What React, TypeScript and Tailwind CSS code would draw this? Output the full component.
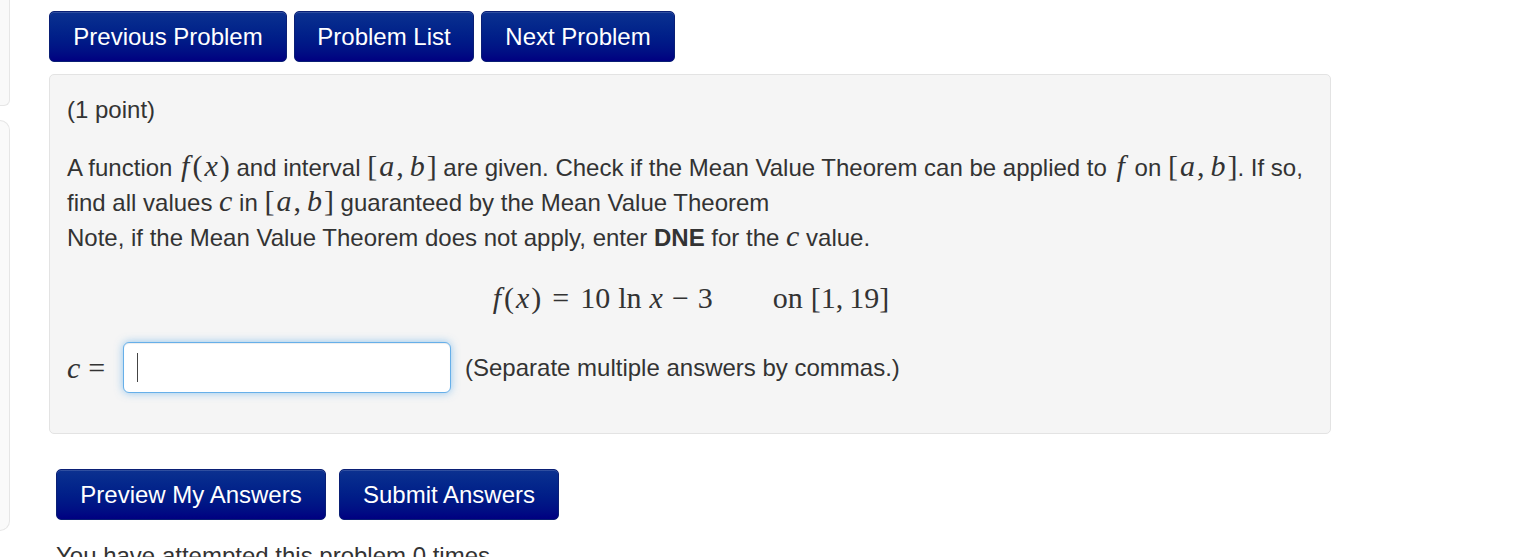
import { ReactNode } from "react";

const sans = "font-['Liberation_Sans',Arial,sans-serif]";
const serif = "font-['Liberation_Serif','Times_New_Roman',serif]";

function NavButton({ children, className = "" }: { children: ReactNode; className?: string }) {
    return (
        <button
            className={`h-[51px] rounded-[5px] border border-[#0a1f75] bg-gradient-to-b from-[#0c3190] to-[#000081] text-[24px] text-white shadow-[inset_0_1px_0_rgba(255,255,255,0.15)] ${className}`}
        >
            {children}
        </button>
    );
}

// inline TeX-ish math
function M({ children, className = "" }: { children: ReactNode; className?: string }) {
    return <span className={`${serif} text-[30px] leading-none ${className}`}>{children}</span>;
}

function V({ children, className = "" }: { children: ReactNode; className?: string }) {
    return <i className={className}>{children}</i>;
}

function Fx() {
    return (
        <>
            <V className="ml-[2px] mr-[3px]">f</V>(<V className="mx-[2px]">x</V>)
        </>
    );
}

function Interval() {
    return (
        <M>
            [<V className="mx-[2px]">a</V>,<span className="ml-[6px]" />
            <V className="mr-[2px]">b</V>]
        </M>
    );
}

export default function App() {
    return (
        <div className={`flex min-h-[557px] overflow-hidden bg-white text-[#333] ${sans}`}>
            <div className="flex w-[10px] shrink-0 flex-col">
                <div className="h-[106px] rounded-br-[6px] border-r border-b border-[#e6e6e6] bg-[#f9f9f9]" />
                <div className="mt-[14px] h-[411px] rounded-r-[10px] border-y border-r border-[#e6e6e6] bg-[#fafafa]" />
            </div>

            <div className="ml-[39px] w-[1282px] pt-[11px]">
                <div className="flex gap-[7px]">
                    <NavButton className="w-[238px]">Previous Problem</NavButton>
                    <NavButton className="w-[180px]">Problem List</NavButton>
                    <NavButton className="w-[194px]">Next Problem</NavButton>
                </div>

                <div className="mt-[12px] h-[360px] rounded-[5px] border border-[#e3e3e3] bg-[#f5f5f5] px-[17px] pt-[17px] text-[24px] leading-[35px]">
                    <p>(1 point)</p>

                    <p className="mt-[23px]">
                        A function{" "}
                        <M>
                            <Fx />
                        </M>{" "}
                        and interval <Interval /> are given. Check if the Mean Value Theorem can be applied to{" "}
                        <M>
                            <V className="ml-[3px] mr-[3px]">f</V>
                        </M>{" "}
                        on <Interval />. If so,
                        <br />
                        find all values{" "}
                        <M>
                            <V>c</V>
                        </M>{" "}
                        in <Interval /> guaranteed by the Mean Value Theorem
                        <br />
                        Note, if the Mean Value Theorem does not apply, enter <b>DNE</b> for the{" "}
                        <M>
                            <V>c</V>
                        </M>{" "}
                        value.
                    </p>

                    <div className="mt-[28px] flex justify-center">
                        <M className="leading-[35px]">
                            <Fx />
                            <span className="mx-[11px]">=</span>10<span className="ml-[8px]">ln</span>
                            <V className="ml-[8px]">x</V>
                            <span className="mx-[9px]">−</span>3<span className="ml-[60px]">on</span>
                            <span className="ml-[8px]">[1,</span>
                            <span className="ml-[6px]">19]</span>
                        </M>
                    </div>

                    <div className="mt-[29px] flex items-center">
                        <M className="w-[56px]">
                            <V>c</V>
                            <span className="ml-[8px]">=</span>
                        </M>
                        <div className="relative">
                            <input
                                className="block h-[51px] w-[328px] rounded-[6px] border border-[#66afe9] bg-white px-[13px] text-[24px] text-[#333] shadow-[inset_0_1px_1px_rgba(0,0,0,0.075),0_0_9px_rgba(102,175,233,0.7)] outline-none"
                            />
                            <span className="pointer-events-none absolute top-[11px] left-[14px] h-[29px] w-[1px] bg-[#444]" />
                        </div>
                        <span className="ml-[14px]">(Separate multiple answers by commas.)</span>
                    </div>
                </div>

                <div className="ml-[7px] mt-[35px] flex gap-[13px]">
                    <NavButton className="w-[270px]">Preview My Answers</NavButton>
                    <NavButton className="w-[220px]">Submit Answers</NavButton>
                </div>

                <p className="ml-[7px] mt-[18px] text-[24px] leading-[35px]">You have attempted this problem 0 times.</p>
            </div>
        </div>
    );
}
